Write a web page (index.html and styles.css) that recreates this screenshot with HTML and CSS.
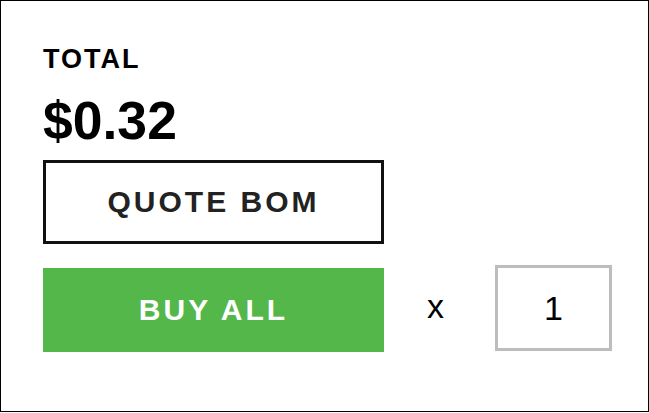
FILE: index.html
```html
<!DOCTYPE html>
<html lang="en">
<head>
<meta charset="utf-8">
<title>Total</title>
<link rel="stylesheet" href="styles.css">
</head>
<body>
<div class="frame">
  <div class="label">TOTAL</div>
  <div class="price">$0.32</div>
  <button class="btn btn-outline" type="button">QUOTE BOM</button>
  <div class="buy-row">
    <button class="btn btn-green" type="button">BUY ALL</button>
    <span class="times">x</span>
    <input class="qty" type="text" value="1">
  </div>
</div>
</body>
</html>
```
FILE: styles.css
```css
html, body {
  margin: 0;
  padding: 0;
  background: #fff;
}
body {
  font-family: "Liberation Sans", Arial, sans-serif;
  color: #000;
}
.frame {
  box-sizing: border-box;
  width: 649px;
  height: 412px;
  border: 1px solid #000;
  padding: 43px 0 0 42px;
}
.label {
  font-size: 27px;
  font-weight: bold;
  line-height: 30px;
  letter-spacing: 2px;
}
.price {
  margin-top: 17px;
  font-size: 53.5px;
  font-weight: bold;
  line-height: 60px;
}
.btn {
  display: flex;
  align-items: center;
  justify-content: center;
  box-sizing: border-box;
  width: 341px;
  height: 84px;
  margin: 0;
  padding: 0;
  font-family: "Liberation Sans", Arial, sans-serif;
  font-size: 30px;
  font-weight: bold;
  letter-spacing: 3px;
  cursor: pointer;
}
.btn-outline {
  margin-top: 9px;
  background: #fff;
  border: 3px solid #111;
  color: #222;
}
.buy-row {
  display: flex;
  align-items: flex-start;
  margin-top: 24px;
}
.btn-green {
  flex: none;
  background: #54b74a;
  border: none;
  color: #fff;
}
.times {
  margin: 18px 0 0 43px;
  font-size: 34px;
  line-height: 40px;
}
.qty {
  flex: none;
  box-sizing: border-box;
  width: 117px;
  height: 86px;
  margin: -3px 0 0 51px;
  padding: 0;
  border: 3px solid #bdbdbd;
  background: #fff;
  font-family: "Liberation Sans", Arial, sans-serif;
  font-size: 34px;
  color: #000;
  text-align: center;
  outline: none;
}
```
